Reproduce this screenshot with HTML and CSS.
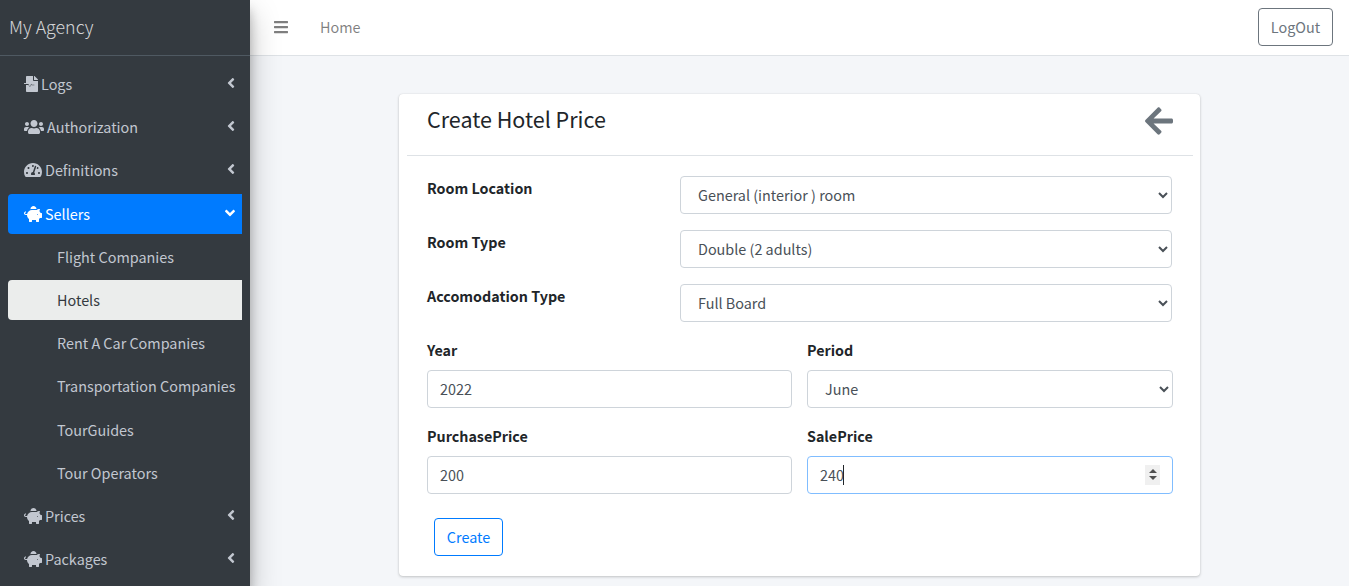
FILE: index.html
```html
<!DOCTYPE html>
<html lang="en">
<head>
<meta charset="utf-8">
<title>Create Hotel Price</title>
<link rel="stylesheet" href="styles.css">
</head>
<body>
<svg class="defs" width="0" height="0" aria-hidden="true">
  <symbol id="i-file" viewBox="0 0 448 512"><path fill="currentColor" d="M288 136V0H88c-13.3 0-24 10.7-24 24v200H8c-4.4 0-8 3.6-8 8v16c0 4.4 3.6 8 8 8h132.9l35.9 71.7c2.9 5.9 11.4 5.8 14.3 0l41.3-82.6 18.4 36.9h73.9c4.4 0 8 3.6 8 8s-3.6 8-8 8h-81l-12.6-25.2-30.9 61.8c-5.9 11.8-22.8 11.8-28.6 0L143.1 288H64v200c0 13.3 10.7 24 24 24h336c13.3 0 24-10.7 24-24V160H312c-13.2 0-24-10.8-24-24zm153-31L343 7c-4.5-4.5-10.6-7-17-7h-6v128h128v-6.1c0-6.3-2.5-12.4-7-16.9z"/></symbol>
  <symbol id="i-users" viewBox="0 0 640 512"><path fill="currentColor" d="M96 224c35.3 0 64-28.7 64-64s-28.7-64-64-64-64 28.7-64 64 28.7 64 64 64zm448 0c35.3 0 64-28.7 64-64s-28.7-64-64-64-64 28.7-64 64 28.7 64 64 64zm32 32h-64c-17.6 0-33.5 7.1-45.1 18.6 40.3 22.1 68.9 62 75.1 109.4h66c17.7 0 32-14.3 32-32v-32c0-35.3-28.7-64-64-64zm-256 0c61.9 0 112-50.1 112-112S381.9 32 320 32 208 82.1 208 144s50.1 112 112 112zm76.8 32h-8.3c-20.8 10-43.9 16-68.5 16s-47.6-6-68.5-16h-8.3C179.6 288 128 339.6 128 403.2V432c0 26.5 21.5 48 48 48h288c26.5 0 48-21.5 48-48v-28.8c0-63.6-51.6-115.2-115.2-115.2zm-223.7-13.4C161.5 263.1 145.6 256 128 256H64c-35.3 0-64 28.7-64 64v32c0 17.7 14.3 32 32 32h65.9c6.3-47.4 34.9-87.3 75.2-109.4z"/></symbol>
  <symbol id="i-gauge" viewBox="0 0 576 512"><path fill="currentColor" d="M288 32C128.94 32 0 160.94 0 320c0 52.8 14.25 102.26 39.06 144.8 5.61 9.62 16.3 15.2 27.44 15.2h443c11.14 0 21.83-5.58 27.44-15.2C561.75 422.26 576 372.8 576 320c0-159.06-128.94-288-288-288zm0 64c14.71 0 26.58 10.13 30.32 23.65-1.11 2.26-2.64 4.23-3.45 6.67l-9.22 27.67c-5.13 3.49-10.97 6.01-17.64 6.01-17.67 0-32-14.33-32-32S270.33 96 288 96zM96 384c-17.67 0-32-14.33-32-32s14.33-32 32-32 32 14.33 32 32-14.33 32-32 32zm48-160c-17.67 0-32-14.33-32-32s14.33-32 32-32 32 14.33 32 32-14.33 32-32 32zm246.77-72.41l-61.33 184C343.13 347.33 352 364.54 352 384c0 11.72-3.38 22.55-8.88 32H232.88c-5.5-9.45-8.88-20.28-8.88-32 0-33.94 26.5-61.43 59.9-63.59l61.34-184.01c4.17-12.56 17.73-19.45 30.36-15.17 12.57 4.19 19.35 17.77 15.17 30.36zm14.66 57.2l15.52-46.55c3.47-1.29 7.13-2.23 11.05-2.23 17.67 0 32 14.33 32 32s-14.33 32-32 32c-11.38-.01-20.89-6.28-26.57-15.22zM480 384c-17.67 0-32-14.33-32-32s14.33-32 32-32 32 14.33 32 32-14.33 32-32 32z"/></symbol>
  <symbol id="i-piggy" viewBox="0 0 576 512"><path fill="currentColor" d="M560 224h-29.5c-8.8-20-21.6-37.7-37.4-52.5L512 96h-32c-29.4 0-55.4 13.5-73 34.3-7.6-1.1-15.1-2.3-23-2.3H256c-77.4 0-141.9 55-156.8 128H56c-14.8 0-26.5-13.5-23.5-28.8C34.7 215.8 45.4 208 57 208h1c3.3 0 6-2.7 6-6v-20c0-3.3-2.7-6-6-6-28.5 0-53.9 20.4-57.5 48.6C-3.9 258.8 22.7 288 56 288h40c0 52.2 25.4 98.1 64 127.3V496c0 8.8 7.2 16 16 16h64c8.8 0 16-7.2 16-16v-48h128v48c0 8.8 7.2 16 16 16h64c8.8 0 16-7.2 16-16v-80.7c11.8-8.9 22.3-19.4 31.3-31.3H560c8.8 0 16-7.2 16-16V240c0-8.8-7.2-16-16-16zm-128 64c-8.8 0-16-7.2-16-16s7.2-16 16-16 16 7.2 16 16-7.2 16-16 16zM256 96h128c5.4 0 10.7.4 15.9.8 0-.3.1-.5.1-.8 0-53-43-96-96-96s-96 43-96 96c0 2.1.5 4.1.6 6.2 15.2-3.9 31-6.2 47.4-6.2z"/></symbol>
  <symbol id="i-left" viewBox="0 0 256 512"><path fill="currentColor" d="M31.7 239l136-136c9.4-9.4 24.6-9.4 33.9 0l22.6 22.6c9.4 9.4 9.4 24.6 0 33.9L127.9 256l96.4 96.4c9.4 9.4 9.4 24.6 0 33.9L201.7 409c-9.4 9.4-24.6 9.4-33.9 0l-136-136c-9.5-9.4-9.5-24.6-.1-34z"/></symbol>
  <symbol id="i-down" viewBox="0 0 320 512"><path fill="currentColor" d="M143 352.3L7 216.3c-9.4-9.4-9.4-24.6 0-33.9l22.6-22.6c9.4-9.4 24.6-9.4 33.9 0l96.4 96.4 96.4-96.4c9.4-9.4 24.6-9.4 33.9 0l22.6 22.6c9.4 9.4 9.4 24.6 0 33.9l-136 136c-9.2 9.4-24.4 9.4-33.8 0z"/></symbol>
</svg>
<div class="app">
  <aside class="sidebar">
    <div class="brand">My Agency</div>
    <nav class="menu">
      <a class="item"><svg class="ico w14"><use href="#i-file"/></svg><span>Logs</span><svg class="chev"><use href="#i-left"/></svg></a>
      <a class="item"><svg class="ico w20"><use href="#i-users"/></svg><span>Authorization</span><svg class="chev"><use href="#i-left"/></svg></a>
      <a class="item"><svg class="ico w18"><use href="#i-gauge"/></svg><span>Definitions</span><svg class="chev"><use href="#i-left"/></svg></a>
      <a class="item active"><svg class="ico w18"><use href="#i-piggy"/></svg><span>Sellers</span><svg class="chev-down"><use href="#i-down"/></svg></a>
      <a class="item sub">Flight Companies</a>
      <a class="item sub current">Hotels</a>
      <a class="item sub">Rent A Car Companies</a>
      <a class="item sub">Transportation Companies</a>
      <a class="item sub">TourGuides</a>
      <a class="item sub">Tour Operators</a>
      <a class="item"><svg class="ico w18"><use href="#i-piggy"/></svg><span>Prices</span><svg class="chev"><use href="#i-left"/></svg></a>
      <a class="item"><svg class="ico w18"><use href="#i-piggy"/></svg><span>Packages</span><svg class="chev"><use href="#i-left"/></svg></a>
    </nav>
  </aside>
  <div class="main">
    <header class="topbar">
      <svg class="bars" viewBox="0 0 448 512"><path fill="currentColor" d="M16 132h416c8.837 0 16-7.163 16-16V76c0-8.837-7.163-16-16-16H16C7.163 60 0 67.163 0 76v40c0 8.837 7.163 16 16 16zm0 160h416c8.837 0 16-7.163 16-16v-40c0-8.837-7.163-16-16-16H16c-8.837 0-16 7.163-16 16v40c0 8.837 7.163 16 16 16zm0 160h416c8.837 0 16-7.163 16-16v-40c0-8.837-7.163-16-16-16H16c-8.837 0-16 7.163-16 16v40c0 8.837 7.163 16 16 16z"/></svg>
      <a class="home">Home</a>
      <button class="logout" type="button">LogOut</button>
    </header>
    <section class="content">
      <div class="card">
        <div class="card-header">
          <h3 class="card-title">Create Hotel Price</h3>
          <svg class="back" viewBox="0 0 448 512"><path fill="currentColor" d="M257.5 445.1l-22.2 22.2c-9.4 9.4-24.6 9.4-33.9 0L7 273c-9.4-9.4-9.4-24.6 0-33.9L201.4 44.7c9.4-9.4 24.6-9.4 33.9 0l22.2 22.2c9.5 9.5 9.3 25-.4 34.3L136.6 216H424c13.3 0 24 10.7 24 24v32c0 13.3-10.7 24-24 24H136.6l120.5 114.8c9.8 9.3 10 24.8.4 34.3z"/></svg>
        </div>
        <form class="card-body">
          <div class="row-inline">
            <label class="lbl">Room Location</label>
            <select class="field sel"><option>General (interior ) room</option></select>
          </div>
          <div class="row-inline">
            <label class="lbl">Room Type</label>
            <select class="field sel"><option>Double (2 adults)</option></select>
          </div>
          <div class="row-inline">
            <label class="lbl">Accomodation Type</label>
            <select class="field sel"><option>Full Board</option></select>
          </div>
          <div class="row-two">
            <div><label class="lbl block">Year</label><input class="field" value="2022"></div>
            <div><label class="lbl block">Period</label><select class="field sel"><option>June</option></select></div>
          </div>
          <div class="row-two">
            <div><label class="lbl block">PurchasePrice</label><input class="field" value="200"></div>
            <div>
              <label class="lbl block">SalePrice</label>
              <div class="focus-wrap">
                <input class="field focused" type="number" value="240">
                <span class="caret"></span>
                <span class="spin"><span class="tri-up"></span><span class="tri-down"></span></span>
              </div>
            </div>
          </div>
          <button class="create" type="button">Create</button>
        </form>
      </div>
    </section>
  </div>
</div>
</body>
</html>
```
FILE: styles.css
```css
* { box-sizing: border-box; }
html, body { margin: 0; height: 586px; overflow: hidden; background: #fff; }
body { font-family: "Noto Sans CJK SC", "Source Sans Pro", "Noto Sans", sans-serif; font-size: 14.4px; line-height: 24px; color: #212529; }
.defs { position: absolute; }
.app { display: flex; height: 586px; padding-right: 2px; }
.sidebar { width: 250px; flex: none; background: #343a40; color: #c2c7d0; box-shadow: 0 14px 28px rgba(0,0,0,.25), 0 10px 10px rgba(0,0,0,.22); position: relative; z-index: 2; overflow: hidden; }
.brand { height: 56px; padding: 0 8px 0 9px; line-height: 52px; font-size: 17.8px; font-weight: 300; color: rgba(255,255,255,.8); border-bottom: 1px solid #4f5962; }
.menu { padding: 8px 8px 0; display: flex; flex-direction: column; gap: 3.2px; }
.item { height: 40px; flex: none; display: flex; align-items: center; padding-left: 16px; border-radius: 4px; position: relative; white-space: nowrap; width: 234px; }
.ico { height: 16px; margin-right: 3px; flex: none; color: #c2c7d0; }
.w14 { width: 14px; }
.w18 { width: 18px; }
.w20 { width: 20px; }
.chev { position: absolute; left: 219px; top: 11px; width: 8px; height: 16px; color: #c2c7d0; }
.chev-down { position: absolute; left: 216px; top: 11px; width: 12px; height: 16px; color: #fff; }
.active { background: #007bff; color: #fff; border-radius: 4px 0 0 4px; }
.active .ico { color: #fff; }
.sub { padding-left: 49px; }
.current { background: #ebedec; color: #343a40; border-radius: 4px 0 0 4px; }
.main { flex: 1; min-width: 0; background: #f4f6f9; display: flex; flex-direction: column; }
.topbar { height: 56px; flex: none; background: #fff; border-bottom: 1px solid #dee2e6; display: flex; align-items: center; padding: 0 16px 1px 24px; }
.bars { width: 14px; height: 16px; color: rgba(0,0,0,.5); }
.home { margin-left: 32px; color: rgba(0,0,0,.5); }
.logout { margin-left: auto; width: 75px; height: 38px; padding: 0; background: #fff; border: 1px solid #6c757d; border-radius: 4px; color: #6c757d; font: inherit; }
.content { padding-top: 38px; }
.card { width: 801px; height: 482px; margin: 0 auto; background: #fff; border-radius: 4px; box-shadow: 0 0 1px rgba(0,0,0,.125), 0 1px 3px rgba(0,0,0,.2); }
.card-header { height: 62px; margin: 0 7px 0 8px; padding: 0 19px 0 20px; border-bottom: 1px solid #dee2e6; display: flex; justify-content: space-between; align-items: center; }
.card-title { margin: 0 0 11px; font-size: 21.5px; line-height: 36px; font-weight: 400; color: #212529; }
.back { width: 28px; height: 32px; margin: 0 1px 7px 0; color: #6c757d; }
.card-body { padding: 20px 27px 0 28px; }
.row-inline { display: grid; grid-template-columns: 253px 492px; margin-bottom: 16px; }
.row-two { display: grid; grid-template-columns: 365px 366px; column-gap: 15px; margin-bottom: 16px; }
.lbl { font-size: 14.3px; font-weight: 700; color: #212529; margin: 0; }
.block { display: block; margin-bottom: 8px; }
.field { display: block; width: 100%; height: 38px; padding: 5px 12px 7px; background: #fff; border: 1px solid #ced4da; border-radius: 4px; color: #495057; font: inherit; outline: 0; }
.sel { padding-left: 13px; }
.focused { border-color: #80bdff; }
.focused::-webkit-inner-spin-button { display: none; }
.focus-wrap { position: relative; }
.caret { position: absolute; left: 36px; top: 9px; width: 1px; height: 20px; background: #212529; }
.spin { position: absolute; left: 338px; top: 9px; width: 15px; height: 20px; background: #f0f0f0; display: flex; flex-direction: column; align-items: center; gap: 3px; padding-top: 4px; }
.tri-up, .tri-down { width: 0; height: 0; border-left: 4px solid transparent; border-right: 4px solid transparent; }
.tri-up { border-bottom: 4px solid #505050; }
.tri-down { border-top: 4px solid #505050; }
.create { display: block; margin: 24px 0 0 7px; width: 69px; height: 38px; padding: 0; background: #fff; border: 1px solid #007bff; border-radius: 4px; color: #007bff; font: inherit; }
```
